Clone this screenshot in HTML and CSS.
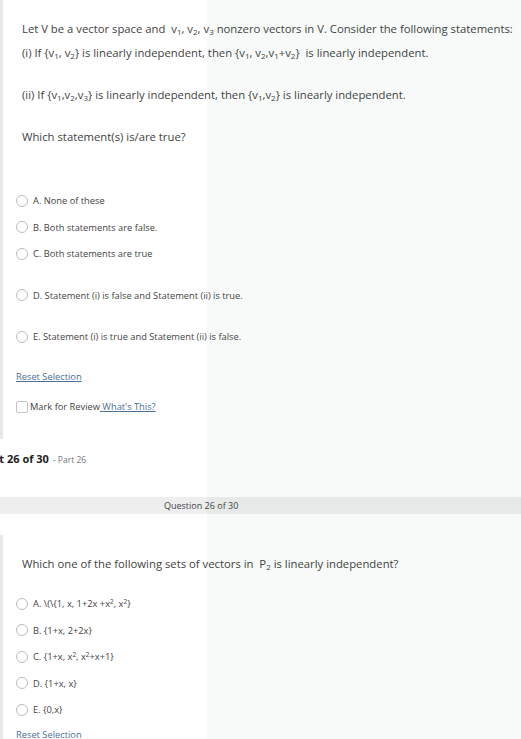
FILE: index.html
```html
<!DOCTYPE html>
<html lang="en">
<head>
    <meta charset="UTF-8">
    <meta name="viewport" content="width=device-width, initial-scale=1.0">
    <title>Quiz</title>
    <link rel="stylesheet" href="styles.css">
</head>
<body>
    <div class="tint"></div>

    <section class="question question--first">
        <div class="question__text">
            <p class="question__line">Let V be a vector space and&nbsp; v<sub>1</sub>, v<sub>2</sub>, v<sub>3</sub> nonzero vectors in V. Consider the following statements:</p>
            <p class="question__line">(i) If {v<sub>1</sub>, v<sub>2</sub>} is linearly independent, then {v<sub>1</sub>, v<sub>2</sub>,v<sub>1</sub>+v<sub>2</sub>}&nbsp; is linearly independent.</p>
            <p class="question__line question__line--gap">(ii) If {v<sub>1</sub>,v<sub>2</sub>,v<sub>3</sub>} is linearly independent, then {v<sub>1</sub>,v<sub>2</sub>} is linearly independent.</p>
            <p class="question__line question__line--gap">Which statement(s) is/are true?</p>
        </div>

        <ol class="options options--first">
            <li class="option"><span class="option__radio"></span><span>A. None of these</span></li>
            <li class="option"><span class="option__radio"></span><span>B. Both statements are false.</span></li>
            <li class="option"><span class="option__radio"></span><span>C. Both statements are true</span></li>
            <li class="option option--wide"><span class="option__radio"></span><span>D. Statement (i) is false and Statement (ii) is true.</span></li>
            <li class="option option--wide"><span class="option__radio"></span><span>E. Statement (i) is true and Statement (ii) is false.</span></li>
        </ol>

        <a href="#" class="reset">Reset Selection</a>

        <div class="review">
            <span class="review__box"></span>
            <span>Mark for Review</span><a href="#" class="review__link">&nbsp;What's This?</a>
        </div>
    </section>

    <div class="part">
        <span class="part__title">Test 26 of 30</span>
        <span class="part__sub">- Part 26</span>
    </div>

    <div class="counter">Question 26 of 30</div>

    <section class="question question--second">
        <div class="question__text">
            <p class="question__line">Which one of the following sets of vectors in&nbsp; P<sub>2</sub> is linearly independent?</p>
        </div>

        <ol class="options options--second">
            <li class="option"><span class="option__radio"></span><span>A. \(\{1, x, 1+2x +x<sup>2</sup>, x<sup>2</sup>}</span></li>
            <li class="option"><span class="option__radio"></span><span>B. {1+x, 2+2x}</span></li>
            <li class="option"><span class="option__radio"></span><span>C. {1+x, x<sup>2</sup>, x<sup>2</sup>+x+1}</span></li>
            <li class="option"><span class="option__radio"></span><span>D. {1+x, x}</span></li>
            <li class="option"><span class="option__radio"></span><span>E. {0,x}</span></li>
        </ol>

        <a href="#" class="reset reset--second">Reset Selection</a>
    </section>
</body>
</html>
```

FILE: styles.css
```css
body {
    margin: 0;
    min-height: 100vh;
    position: relative;
    overflow: hidden;

    font-family: "Open Sans", sans-serif;
    color: #3f3f3f;
    background: #FFFFFF;
}

/* faint green panel over the right part of the page */
.tint {
    position: absolute;
    top: 0;
    bottom: 0;
    left: 207px;
    right: 0;

    background: rgba(40, 130, 70, 0.04);
    pointer-events: none;
    z-index: 1;
}

.question {
    border-left: 3px solid #E8E8E8;
    padding-left: 19px;
}

.question--first {
    padding-top: 21px;
    padding-bottom: 26px;
}

.question--second {
    margin-top: 21px;
    padding-top: 21px;
}

.question__line {
    margin: 8px 0 0;

    font-size: 11.3px;
    line-height: 16px;
    white-space: nowrap;
}

.question__line:first-child {
    margin-top: 0;
}

.question__line--gap {
    margin-top: 26px;
}

.question__line sub {
    font-size: 8px;
    line-height: 0;
    vertical-align: -2px;
}

.options {
    margin: 0 0 0 -6px;
    padding: 0;
    list-style: none;
}

.options--first {
    margin-top: 49px;
}

.options--second {
    margin-top: 25px;
}

.option {
    display: flex;
    align-items: center;
    gap: 5px;

    height: 13px;
    margin-top: 13.5px;

    font-size: 9.3px;
    color: #444;
    white-space: nowrap;
}

.option:first-child {
    margin-top: 0;
}

.option--wide {
    margin-top: 28.5px;
}

.option sup {
    font-size: 6.5px;
    line-height: 0;
    position: relative;
    top: -3px;
    vertical-align: baseline;
}

.option__radio {
    flex: 0 0 auto;
    width: 10px;
    height: 10px;

    border: 1px solid #BDBDBD;
    border-radius: 50%;
    background: #FFFFFF;
}

.reset {
    display: inline-block;
    margin: 27px 0 0 -6px;

    font-size: 9.3px;
    line-height: 13px;
    color: #4A6F98;
    text-decoration: underline;
}

.reset--second {
    margin-top: 12px;
}

.review {
    display: flex;
    align-items: center;

    margin: 15px 0 0 -6px;

    font-size: 9.3px;
    line-height: 13px;
    color: #444;
}

.review__box {
    width: 10px;
    height: 10px;
    margin-right: 2px;

    border: 1px solid #C4C4C4;
    border-radius: 2px;
}

.review__link {
    color: #4A6F98;
    text-decoration: underline;
}

.part {
    display: flex;
    align-items: baseline;
    gap: 4px;

    margin: 12px 0 0 -19px;
    height: 16px;
}

.part__title {
    font-size: 11px;
    font-weight: 700;
    color: #222;
}

.part__sub {
    font-size: 8.5px;
    color: #777;
}

.counter {
    margin-top: 30px;
    height: 17px;
    padding-left: 164px;

    background: #EEEEEE;

    font-size: 9px;
    line-height: 17px;
    color: #444;
}
```
